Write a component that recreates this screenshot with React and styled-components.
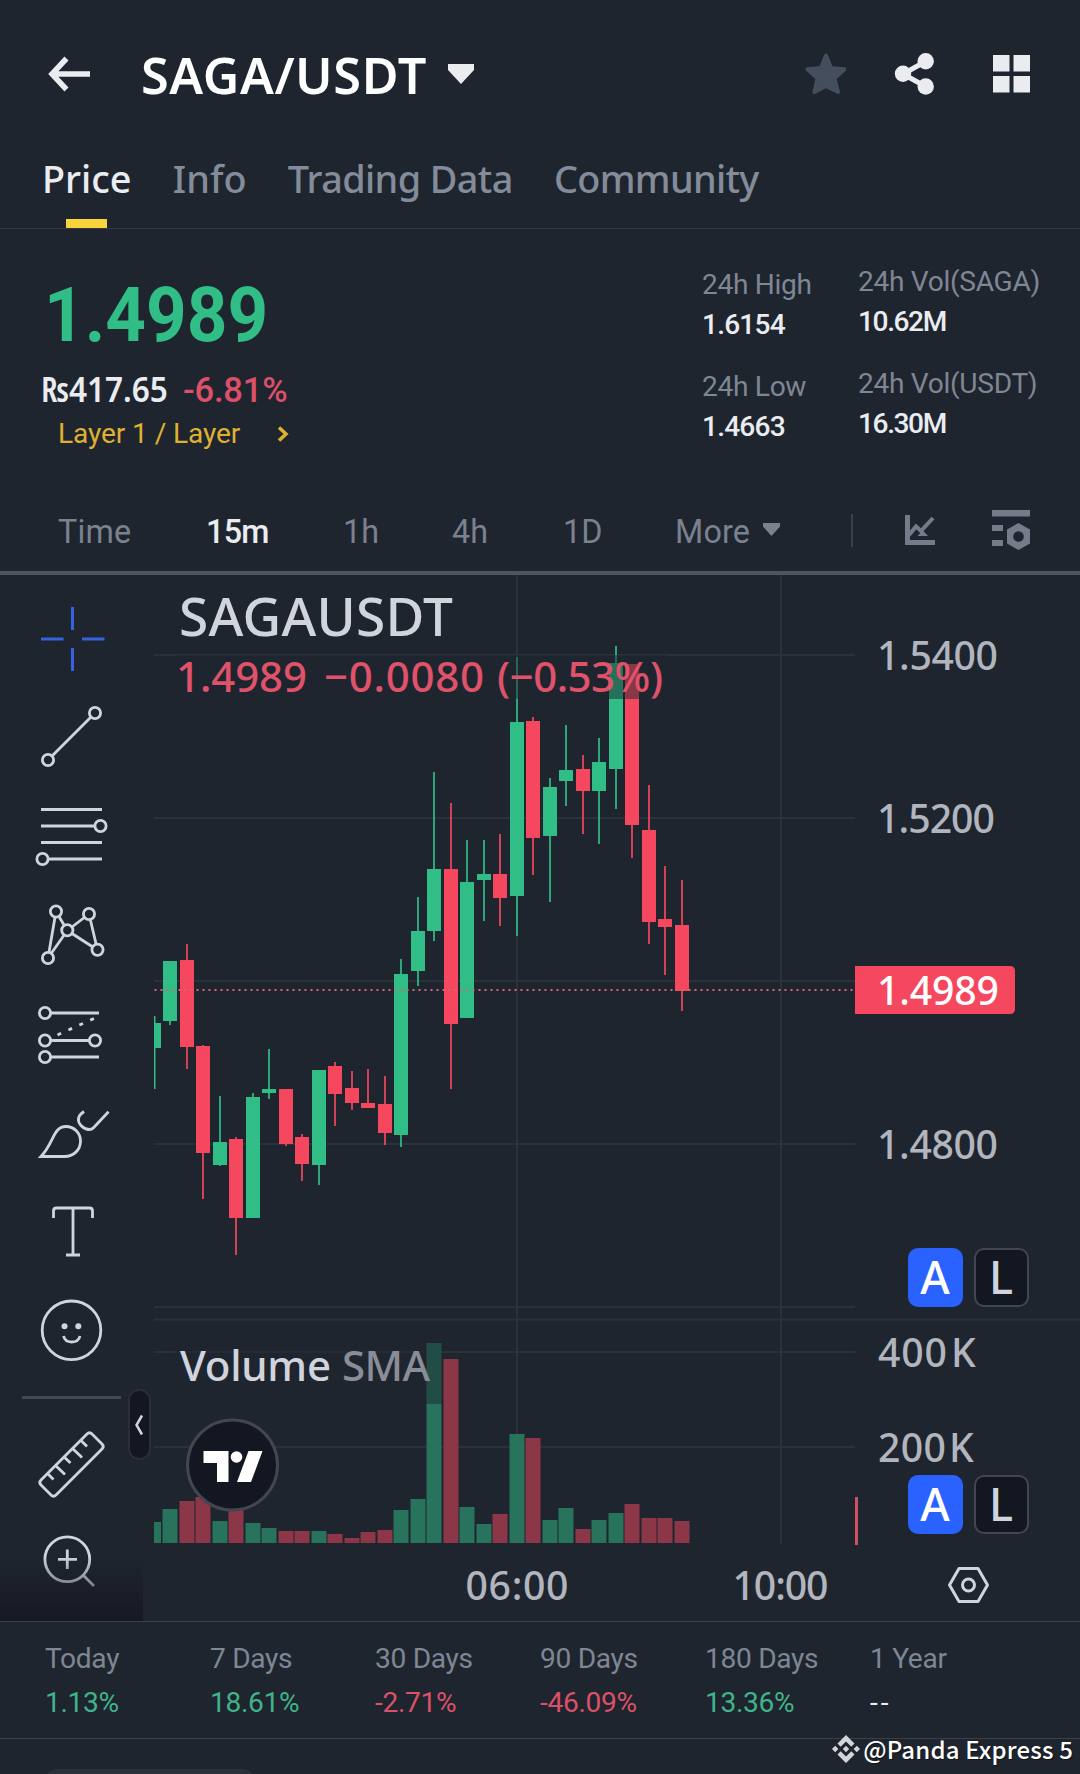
import React from 'react';
import styled, { createGlobalStyle } from 'styled-components';

const c = {
  bg: '#1e252f',
  deep: '#131722',
  line: '#323943',
  grid: '#2a313b',
  text: '#eaecef',
  muted: '#7f8694',
  up: '#30bd86',
  down: '#f5475d',
  icon: '#d1d4dc',
  axis: '#b2b5be',
};

const Global = createGlobalStyle`
  body { margin: 0; background: ${c.bg}; }
  * { box-sizing: border-box; }
`;

const Screen = styled.main`
  width: 1080px;
  height: 1774px;
  overflow: hidden;
  position: relative;
  display: flex;
  flex-direction: column;
  background: ${c.bg};
  color: ${c.text};
  font-family: Roboto, sans-serif;
`;

/* ---------- header ---------- */
const Header = styled.header`
  height: 147px;
  flex: none;
  display: flex;
  align-items: center;
  padding: 0 50px 0 48px;
`;
const Pair = styled.h1`
  margin: 2px 21px 0 49px;
  font: 600 50.4px/80px 'Noto Sans', sans-serif;
  letter-spacing: 0.6px;
  color: #fff;
  white-space: nowrap;
`;
const HeaderActions = styled.div`
  margin-left: auto;
  display: flex;
  align-items: center;
  gap: 48px;
`;

/* ---------- tabs ---------- */
const Tabs = styled.nav`
  height: 82px;
  flex: none;
  display: flex;
  gap: 41.3px;
  padding-left: 42px;
  border-bottom: 1px solid ${c.line};
`;
const Tab = styled.div`
  display: flex;
  flex-direction: column;
  align-items: center;
  justify-content: space-between;
  font: 500 37.8px/63px 'Noto Sans', sans-serif;
  letter-spacing: ${(p) => p.$track || 0}px;
  color: ${(p) => (p.$active ? c.text : '#848c9a')};
  &::after {
    content: '';
    width: 41px;
    height: 9px;
    background: ${(p) => (p.$active ? '#f8d33a' : 'transparent')};
  }
`;

/* ---------- summary ---------- */
const Summary = styled.section`
  height: 263px;
  flex: none;
  display: grid;
  grid-template-columns: 662px 156px 1fr;
  padding-left: 40px;
`;
const PriceBlock = styled.div`
  padding-top: 49px;
`;
const LastPrice = styled.div`
  font: 700 75.9px/76px Roboto, sans-serif;
  color: ${c.up};
  width: max-content;
  margin-left: 4px;
  transform: scaleX(0.935);
  transform-origin: left;
`;
const FiatRow = styled.div`
  display: flex;
  height: 44px;
  margin-top: 14px;
  line-height: 44px;
`;
const Fiat = styled.div`
  width: 142px;
  margin-left: 1px;
  font: 600 34.3px/42px 'Noto Sans', sans-serif;
  white-space: nowrap;
  transform: scaleX(0.92);
  transform-origin: left;
`;
const Change = styled.div`
  font-size: 34.5px;
  font-weight: 500;
  letter-spacing: -0.2px;
  color: #dd5068;
`;
const SectorLink = styled.div`
  display: flex;
  align-items: center;
  gap: 37px;
  margin: 4px 0 0 18px;
  font-size: 28.1px;
  line-height: 36px;
  letter-spacing: -0.1px;
  color: #dfb032;
`;
const StatColumn = styled.dl`
  margin: 0;
  padding-top: ${(p) => p.$top}px;
  line-height: 40px;
  font-size: 28.1px;
  white-space: nowrap;
`;
const StatLabel = styled.dt`
  color: ${c.muted};
  letter-spacing: -0.3px;
`;
const StatValue = styled.dd`
  margin: 0 0 22px;
  font-weight: 500;
  letter-spacing: ${(p) => (p.$wide ? -1.4 : -0.8)}px;
`;

/* ---------- intervals ---------- */
const Intervals = styled.div`
  height: 83px;
  flex: none;
  display: grid;
  grid-template-columns: 148px 137px 109px 111px 112px 176px 53px 87px 1fr;
  align-items: center;
  padding-left: 58px;
  border-bottom: 4px solid #4f545e;
`;
const Interval = styled.div`
  display: flex;
  align-items: center;
  gap: 13px;
  font-size: 32.3px;
  font-weight: ${(p) => (p.$active ? 500 : 400)};
  letter-spacing: ${(p) => (p.$active ? '-0.7px' : '0.2px')};
  color: ${(p) => (p.$active ? c.text : '#7b818e')};
`;
const Divider = styled.div`
  width: 2px;
  height: 33px;
  margin-bottom: 3px;
  background: #3a414c;
`;
const IntervalIcon = styled.svg`
  display: block;
  margin-bottom: 4px;
`;

/* ---------- chart ---------- */
const ChartArea = styled.section`
  height: 1046px;
  flex: none;
  display: flex;
  position: relative;
`;
const Toolbar = styled.aside`
  width: 143px;
  display: flex;
  flex-direction: column;
  padding-top: 15px;
  position: relative;
  &::after {
    content: '';
    position: absolute;
    inset: auto 0 0 0;
    height: 65px;
    background: linear-gradient(rgba(19, 23, 34, 0), rgba(21, 24, 35, 0.95));
  }
`;
const ToolSvg = styled.svg`
  display: block;
  width: 143px;
  height: ${(p) => p.$h || 98}px;
  flex: none;
  fill: none;
  stroke: ${(p) => (p.$active ? '#3563dd' : c.icon)};
  stroke-width: 2.8;
`;
const ToolDivider = styled.hr`
  width: 99px;
  height: 3px;
  margin: 22px 0 0 22px;
  border: 0;
  background: #434851;
  flex: none;
`;
const CollapseTab = styled.button`
  position: absolute;
  left: 128px;
  top: 814px;
  width: 23px;
  height: 71px;
  padding: 0 2px 0 0;
  display: grid;
  place-items: center;
  border-radius: 11px;
  border: 2px solid #2a2e39;
  background: ${c.deep};
`;
const ScaleButtons = styled.div`
  position: absolute;
  left: 908px;
  top: ${(p) => p.$top}px;
  display: flex;
  gap: 11px;
`;
const ScaleButton = styled.button`
  width: 55px;
  height: 59px;
  padding: 0 1px 2px 0;
  border-radius: 10px;
  border: 2px solid ${(p) => (p.$on ? '#2962ff' : '#434651')};
  background: ${(p) => (p.$on ? '#2962ff' : c.deep)};
  color: ${(p) => (p.$on ? '#fff' : c.icon)};
  font: 500 45px/52px 'Noto Sans', sans-serif;
`;
const Plot = styled.svg`
  display: block;
  width: 937px;
  height: 1046px;
  font-family: 'Noto Sans', sans-serif;
  font-weight: 500;
`;

/* ---------- performance ---------- */
const Performance = styled.section`
  height: 118px;
  flex: none;
  display: grid;
  grid-template-columns: repeat(5, 165px) 1fr;
  padding: 16px 0 0 45px;
  border-top: 1px solid #39404a;
  border-bottom: 1px solid #39404a;
  font-size: 28.1px;
  line-height: 42px;
  white-space: nowrap;
`;
const PeriodLabel = styled.div`
  color: ${c.muted};
  letter-spacing: -0.3px;
`;
const PeriodValue = styled.div`
  margin-top: 2px;
  color: ${(p) => ({ up: '#40b489', down: '#dc5068', none: c.text })[p.$tone]};
  letter-spacing: ${(p) => (p.$tone === 'none' ? 3 : -0.3)}px;
`;
const Pill = styled.div`
  margin: 30px 0 0 44px;
  width: 212px;
  height: 60px;
  flex: none;
  border-radius: 14px;
  background: #2a313d;
`;
const Watermark = styled.div`
  position: absolute;
  right: 7px;
  top: 1731px;
  display: flex;
  align-items: center;
  gap: 3px;
  font: 500 24px/36px 'Noto Sans CJK SC', sans-serif;
  letter-spacing: 0.15px;
  color: #fff;
  white-space: nowrap;
  text-shadow: 1px 1px 1px rgba(0, 0, 0, 0.5);
`;

/* ---------- data ---------- */
// centre x, high, body top, body bottom, low, direction, volume top
const bars = [
  [170, 961, 961, 1021, 1025, 1, 1509],
  [187, 944, 960, 1047, 1069, 0, 1501],
  [203, 1045, 1046, 1153, 1199, 0, 1497],
  [220, 1096, 1142, 1165, 1166, 1, 1521],
  [236, 1137, 1139, 1218, 1255, 0, 1508],
  [253, 1093, 1097, 1218, 1218, 1, 1523],
  [269, 1049, 1089, 1093, 1099, 1, 1528],
  [286, 1089, 1089, 1144, 1146, 0, 1531],
  [302, 1134, 1137, 1164, 1181, 0, 1531],
  [319, 1070, 1070, 1165, 1185, 1, 1531],
  [335, 1062, 1066, 1094, 1126, 0, 1534],
  [352, 1071, 1088, 1103, 1110, 0, 1538],
  [368, 1069, 1103, 1108, 1108, 0, 1532],
  [385, 1076, 1104, 1133, 1145, 0, 1530],
  [401, 959, 974, 1135, 1147, 1, 1510],
  [418, 897, 931, 971, 986, 1, 1499],
  [434, 772, 869, 931, 941, 1, 1343],
  [451, 803, 869, 1024, 1089, 0, 1359],
  [467, 840, 882, 1018, 1018, 1, 1507],
  [484, 840, 874, 880, 921, 1, 1524],
  [500, 834, 874, 898, 926, 0, 1514],
  [517, 657, 722, 896, 936, 1, 1434],
  [533, 717, 721, 838, 875, 0, 1438],
  [550, 778, 787, 836, 902, 1, 1520],
  [566, 725, 770, 781, 806, 1, 1508],
  [583, 755, 769, 791, 834, 0, 1529],
  [599, 738, 762, 791, 844, 1, 1520],
  [616, 646, 663, 769, 809, 1, 1513],
  [632, 664, 664, 825, 858, 0, 1504],
  [649, 785, 830, 922, 944, 0, 1518],
  [665, 866, 919, 927, 975, 0, 1518],
  [682, 880, 925, 991, 1011, 0, 1521],
];
const periods = [
  ['Today', '1.13%', 'up'],
  ['7 Days', '18.61%', 'up'],
  ['30 Days', '-2.71%', 'down'],
  ['90 Days', '-46.09%', 'down'],
  ['180 Days', '13.36%', 'up'],
  ['1 Year', '--', 'none'],
];

function Tool({ top, h = 98, active, children }) {
  return (
    <ToolSvg viewBox={`0 ${top} 143 ${h}`} $h={h} $active={active}>
      {children}
    </ToolSvg>
  );
}
const Ring = ({ x, y }) => <circle cx={x} cy={y} r="5.6" fill={c.bg} />;

function Tools() {
  return (
    <Toolbar>
      <Tool top={590} active>
        <path strokeWidth="3" d="M72.500 607v23M72.500 648v23M41 639h22.500M82 639h22.500" />
      </Tool>
      <Tool top={688}>
        <path d="M48 760 95 713" />
        <Ring x={95} y={713} />
        <Ring x={48} y={760} />
      </Tool>
      <Tool top={786}>
        <path d="M41 809.5h61M41 826h56M41 842.5h61M45 859h57" />
        <Ring x={100.5} y={826} />
        <Ring x={42.5} y={859} />
      </Tool>
      <Tool top={884}>
        <path d="M48 958 56 911.5 67.3 930.5zM67.3 930.5 89 914M89 914l8.5 36M67.3 930.5 97.5 950" />
        <Ring x={56} y={911.5} />
        <Ring x={89} y={914} />
        <Ring x={67.3} y={930.3} />
        <Ring x={48} y={958} />
        <Ring x={97.5} y={949.7} />
      </Tool>
      <Tool top={982}>
        <path d="M48 1013h51M48 1040.5h45M48 1057h51" />
        <path strokeDasharray="4 8" d="M57.5 1035 95 1018" />
        <Ring x={45} y={1013} />
        <Ring x={45} y={1040.5} />
        <Ring x={95} y={1040.5} />
        <Ring x={45} y={1057} />
      </Tool>
      <Tool top={1080}>
        <path d="M41 1156.500C54 1143 53 1126.500 66 1126.500c8 0 14.500 6.500 14.500 14.500 0 9-7 15.500-16 15.500z" />
        <path d="M84 1111.500c-6 4-7.500 9-3 14 2.500 2.700 5.500 4 8 4 2 0 3.500-.7 4.500-1.800l15-16" />
      </Tool>
      <Tool top={1178}>
        <path d="M53.500 1218v-7q0-3 3-3h33q3 0 3 3v7M73 1208v47M66 1255h14" />
      </Tool>
      <Tool top={1276}>
        <circle cx="71.500" cy="1330.300" r="29.300" />
        <g fill={c.icon} stroke="none">
          <circle cx="64.500" cy="1326.300" r="3" />
          <circle cx="78.300" cy="1326.300" r="3" />
        </g>
        <path d="M63.500 1336c2 8 14.500 8 16.500 0" />
      </Tool>
      <ToolDivider />
      <Tool top={1399} h={120}>
        <path
          strokeLinejoin="round"
          d="M87 1434q2.500-2.500 5 0l10 10q2.500 2.500 0 5l-46 46q-2.500 2.500-5 0l-10-10q-2.500-2.500 0-5z"
        />
        <path d="M47.500 1473.500l6 6M55.500 1465.500l9.500 9M64 1457l6.500 6M72.500 1448.500l9.500 9M81 1440.500l6 6" />
      </Tool>
      <Tool top={1519} h={102}>
        <circle cx="67.300" cy="1559.300" r="22.400" />
        <path d="M58 1559.300h19M67.300 1549.500v19.500M83.500 1575.500 94 1586" />
      </Tool>
    </Toolbar>
  );
}

function Label({ x, y, len, size = 39.2, fill = c.axis, children }) {
  return (
    <text x={x} y={y} textLength={len} fontSize={size} fill={fill}>
      {children}
    </text>
  );
}

function Chart() {
  return (
    <Plot viewBox="143 575 937 1046">
      <g stroke={c.grid} strokeWidth="2">
        <path d="M154 655H855M154 818H855M154 981H855M154 1144H855M154 1307H855M154 1352H855M154 1447H855" />
        <path d="M517 575V1544M781 575V1544" />
        <path d="M154 1319.500H1080" />
      </g>
      <rect x="154" y="1522" width="7" height="21" fill="#27735c" />
      <path d="M154.750 1016V1089" stroke={c.up} strokeWidth="1.500" />
      <rect x="154" y="1023" width="7" height="25" fill={c.up} />
      {bars.map(([x, hi, top, bottom, low, up, vol]) => (
        <g key={x} fill={up ? c.up : c.down}>
          <rect x={x - 7.5} y={vol} width="15" height={1543 - vol} fill={up ? '#27735c' : '#8b3748'} />
          <rect x={x - 1} y={hi} width="2" height={low - hi} opacity="0.85" />
          <rect x={x - 7} y={top} width="14" height={bottom - top} />
        </g>
      ))}
      <path d="M154.500 990H855" stroke="#d46775" strokeWidth="2" strokeDasharray="2 4" />
      <rect x="855" y="1497" width="3" height="48" fill="#cf5264" />

      <rect x="175" y="655" width="493" height="44" fill={c.bg} opacity="0.5" />
      <rect x="175" y="1340" width="267" height="64" fill={c.bg} opacity="0.5" />
      <Label x={179} y={636} len={274} size={53.2} fill={c.icon}>SAGAUSDT</Label>
      <Label x={176} y={691.5} len={131} size={42} fill="#df5269">1.4989</Label>
      <Label x={324} y={691.5} len={160} size={42} fill="#df5269">−0.0080</Label>
      <Label x={497} y={691.5} len={166} size={42} fill="#df5269">(−0.53%)</Label>
      <Label x={180} y={1381} len={151} size={42} fill={c.icon}>Volume</Label>
      <Label x={342} y={1381} len={88} size={42} fill="#8a8d97">SMA</Label>

      <Label x={877} y={669.5} len={121}>1.5400</Label>
      <Label x={877} y={832.5} len={118}>1.5200</Label>
      <Label x={877} y={1158.5} len={121}>1.4800</Label>
      <path d="M855 966H1010q5 0 5 5V1009q0 5-5 5H855z" fill={c.down} />
      <Label x={877} y={1004.5} len={122} fill="#fff">1.4989</Label>
      <Label x={878} y={1366.5} len={69}>400</Label>
      <Label x={951} y={1366.5} len={26}>K</Label>
      <Label x={878} y={1461.5} len={68}>200</Label>
      <Label x={949} y={1461.5} len={26}>K</Label>
      <Label x={465.5} y={1599.5} len={103}>06:00</Label>
      <Label x={732.5} y={1599.5} len={96}>10:00</Label>

      <circle cx="232.500" cy="1465" r="45" fill={c.deep} stroke="#434651" strokeWidth="3" />
      <g fill="#fff">
        <path d="M203.500 1451h25v31H217v-19h-13.500zM248.500 1451h14L251 1482h-14z" />
        <circle cx="236.500" cy="1457" r="5.800" />
      </g>
      <g fill="none" stroke={c.icon} strokeWidth="3" strokeLinejoin="round">
        <path d="M959 1568.500h19L987.500 1585l-9.500 16.500h-19L949.500 1585z" />
        <circle cx="968.500" cy="1585" r="6" />
      </g>
    </Plot>
  );
}

function ScaleToggle({ top }) {
  return (
    <ScaleButtons $top={top}>
      <ScaleButton $on>A</ScaleButton>
      <ScaleButton>L</ScaleButton>
    </ScaleButtons>
  );
}

export default function App() {
  return (
    <Screen>
      <Global />
      <Header>
        <svg width="44" height="36" viewBox="0 0 44 36" fill="none" stroke={c.text} strokeWidth="5.500">
          <path d="M42 18H5M18.500 2.500 4 18l14.500 15.500" />
        </svg>
        <Pair>SAGA/USDT</Pair>
        <svg width="26" height="20" viewBox="0 0 26 20" fill={c.text}>
          <path d="M0 0h26v6L13 20 0 6z" />
        </svg>
        <HeaderActions>
          <svg width="42" height="42" viewBox="-2 0.5 42 42" fill="#454e5d" stroke="#454e5d" strokeWidth="4" strokeLinejoin="round">
            <path d="M20 3l5 12.500 13.500 1.200-10 9 3.500 13.800L20 33.500 8.500 39.500l3-13.800-10-9L15 15.500z" />
          </svg>
          <svg width="40" height="42" viewBox="-1 0 40 42" fill={c.text}>
            <path d="M30.500 8.500 8 21l22.500 12.500" fill="none" stroke={c.text} strokeWidth="5" />
            <circle cx="30.700" cy="8.300" r="8.200" />
            <circle cx="8" cy="20.800" r="8.200" />
            <circle cx="30.700" cy="33.500" r="8.200" />
          </svg>
          <svg width="48" height="38" viewBox="-11 0 48 38" fill={c.text}>
            <path d="M0 0h16.500v16.500H0zM20.500 0H37v16.500H20.500zM0 21h16.500v16.500H0zM20.500 21H37v16.500H20.500z" />
          </svg>
        </HeaderActions>
      </Header>

      <Tabs>
        <Tab $active>Price</Tab>
        <Tab>Info</Tab>
        <Tab $track={-0.6}>Trading Data</Tab>
        <Tab $track={-0.7}>Community</Tab>
      </Tabs>

      <Summary>
        <PriceBlock>
          <LastPrice>1.4989</LastPrice>
          <FiatRow>
            <Fiat>₨417.65</Fiat>
            <Change>-6.81%</Change>
          </FiatRow>
          <SectorLink>
            Layer 1 / Layer
            <svg width="12" height="16" viewBox="0 0 12 16" fill="none" stroke="#dfb032" strokeWidth="3.500">
              <path d="M2 1.500 9 8l-7 6.500" />
            </svg>
          </SectorLink>
        </PriceBlock>
        <StatColumn $top={36}>
          <StatLabel>24h High</StatLabel>
          <StatValue>1.6154</StatValue>
          <StatLabel>24h Low</StatLabel>
          <StatValue>1.4663</StatValue>
        </StatColumn>
        <StatColumn $top={33}>
          <StatLabel>24h Vol(SAGA)</StatLabel>
          <StatValue $wide>10.62M</StatValue>
          <StatLabel>24h Vol(USDT)</StatLabel>
          <StatValue $wide>16.30M</StatValue>
        </StatColumn>
      </Summary>

      <Intervals>
        <Interval>Time</Interval>
        <Interval $active>15m</Interval>
        <Interval>1h</Interval>
        <Interval>4h</Interval>
        <Interval>1D</Interval>
        <Interval>
          More
          <svg width="17" height="20" viewBox="0 0 17 20" fill="#7b818e">
            <path d="M0 1h17v3.500L8.500 14 0 4.500z" />
          </svg>
        </Interval>
        <Divider />
        <IntervalIcon width="32" height="32" viewBox="904 513 32 32">
          <path d="M905 514h5v25h25v5h-30z" fill="#757b89" />
          <path d="M909 534l7-8.500 5 4.500 12-13" fill="none" stroke="#757b89" strokeWidth="4" />
          <path d="M917.500 535h10.500l-5.200-5.500z" fill="#757b89" />
        </IntervalIcon>
        <IntervalIcon width="40" height="42" viewBox="991 510 40 42" fill="#757b89">
          <path d="M992 511h38v6.500h-38zM992 526h11v6h-11zM992 541h11v6h-11z" />
          <path fillRule="evenodd" d="M1018.500 524l11.500 6.500v14l-11.500 6.500-11.500-6.500v-14zm0 8.200a5.300 5.300 0 1 0 0 10.600 5.300 5.300 0 0 0 0-10.600z" />
        </IntervalIcon>
      </Intervals>

      <ChartArea>
        <Tools />
        <Chart />
        <CollapseTab aria-label="Collapse">
          <svg width="10" height="22" viewBox="0 0 10 22" fill="none" stroke={c.icon} strokeWidth="2.500">
            <path d="M8 1.500 2.500 11 8 20.500" />
          </svg>
        </CollapseTab>
        <ScaleToggle top={673} />
        <ScaleToggle top={900} />
      </ChartArea>

      <Performance>
        {periods.map(([label, value, tone]) => (
          <div key={label}>
            <PeriodLabel>{label}</PeriodLabel>
            <PeriodValue $tone={tone}>{value}</PeriodValue>
          </div>
        ))}
      </Performance>
      <Pill />

      <Watermark>
        <svg width="28" height="28" viewBox="0 0 28 28" fill="#d3d5d8">
          <path d="M14 0l8.500 8.500-3.200 3.200L14 6.400l-5.300 5.300-3.200-3.200zM14 28l8.500-8.500-3.200-3.200L14 21.600l-5.300-5.300-3.200 3.200zM3.200 10.800 6.400 14l-3.200 3.200L0 14zM24.800 10.800 28 14l-3.200 3.200-3.200-3.200zM14 10.800l3.200 3.200-3.200 3.200-3.200-3.200z" />
        </svg>
        @Panda Express 5
      </Watermark>
    </Screen>
  );
}
